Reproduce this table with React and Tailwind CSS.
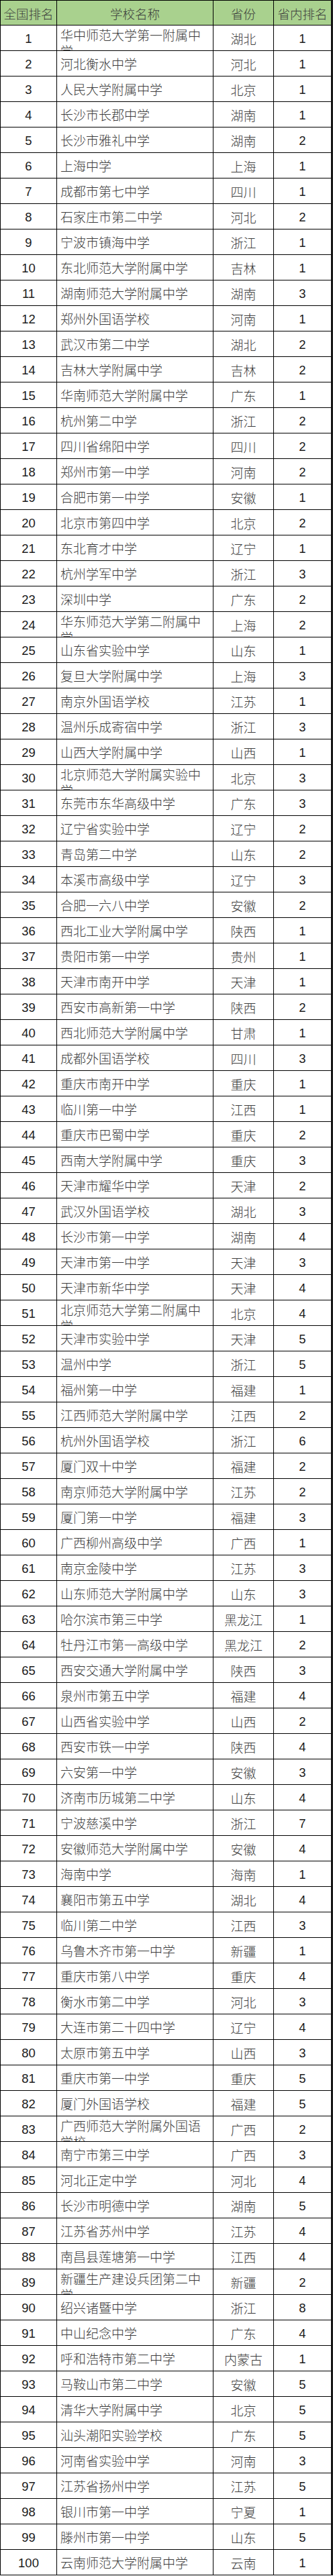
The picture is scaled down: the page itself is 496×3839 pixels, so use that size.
import React from 'react';

const rows = [
  [1, '华中师范大学第一附属中学', '湖北', 1],
  [2, '河北衡水中学', '河北', 1],
  [3, '人民大学附属中学', '北京', 1],
  [4, '长沙市长郡中学', '湖南', 1],
  [5, '长沙市雅礼中学', '湖南', 2],
  [6, '上海中学', '上海', 1],
  [7, '成都市第七中学', '四川', 1],
  [8, '石家庄市第二中学', '河北', 2],
  [9, '宁波市镇海中学', '浙江', 1],
  [10, '东北师范大学附属中学', '吉林', 1],
  [11, '湖南师范大学附属中学', '湖南', 3],
  [12, '郑州外国语学校', '河南', 1],
  [13, '武汉市第二中学', '湖北', 2],
  [14, '吉林大学附属中学', '吉林', 2],
  [15, '华南师范大学附属中学', '广东', 1],
  [16, '杭州第二中学', '浙江', 2],
  [17, '四川省绵阳中学', '四川', 2],
  [18, '郑州市第一中学', '河南', 2],
  [19, '合肥市第一中学', '安徽', 1],
  [20, '北京市第四中学', '北京', 2],
  [21, '东北育才中学', '辽宁', 1],
  [22, '杭州学军中学', '浙江', 3],
  [23, '深圳中学', '广东', 2],
  [24, '华东师范大学第二附属中学', '上海', 2],
  [25, '山东省实验中学', '山东', 1],
  [26, '复旦大学附属中学', '上海', 3],
  [27, '南京外国语学校', '江苏', 1],
  [28, '温州乐成寄宿中学', '浙江', 3],
  [29, '山西大学附属中学', '山西', 1],
  [30, '北京师范大学附属实验中学', '北京', 3],
  [31, '东莞市东华高级中学', '广东', 3],
  [32, '辽宁省实验中学', '辽宁', 2],
  [33, '青岛第二中学', '山东', 2],
  [34, '本溪市高级中学', '辽宁', 3],
  [35, '合肥一六八中学', '安徽', 2],
  [36, '西北工业大学附属中学', '陕西', 1],
  [37, '贵阳市第一中学', '贵州', 1],
  [38, '天津市南开中学', '天津', 1],
  [39, '西安市高新第一中学', '陕西', 2],
  [40, '西北师范大学附属中学', '甘肃', 1],
  [41, '成都外国语学校', '四川', 3],
  [42, '重庆市南开中学', '重庆', 1],
  [43, '临川第一中学', '江西', 1],
  [44, '重庆市巴蜀中学', '重庆', 2],
  [45, '西南大学附属中学', '重庆', 3],
  [46, '天津市耀华中学', '天津', 2],
  [47, '武汉外国语学校', '湖北', 3],
  [48, '长沙市第一中学', '湖南', 4],
  [49, '天津市第一中学', '天津', 3],
  [50, '天津市新华中学', '天津', 4],
  [51, '北京师范大学第二附属中学', '北京', 4],
  [52, '天津市实验中学', '天津', 5],
  [53, '温州中学', '浙江', 5],
  [54, '福州第一中学', '福建', 1],
  [55, '江西师范大学附属中学', '江西', 2],
  [56, '杭州外国语学校', '浙江', 6],
  [57, '厦门双十中学', '福建', 2],
  [58, '南京师范大学附属中学', '江苏', 2],
  [59, '厦门第一中学', '福建', 3],
  [60, '广西柳州高级中学', '广西', 1],
  [61, '南京金陵中学', '江苏', 3],
  [62, '山东师范大学附属中学', '山东', 3],
  [63, '哈尔滨市第三中学', '黑龙江', 1],
  [64, '牡丹江市第一高级中学', '黑龙江', 2],
  [65, '西安交通大学附属中学', '陕西', 3],
  [66, '泉州市第五中学', '福建', 4],
  [67, '山西省实验中学', '山西', 2],
  [68, '西安市铁一中学', '陕西', 4],
  [69, '六安第一中学', '安徽', 3],
  [70, '济南市历城第二中学', '山东', 4],
  [71, '宁波慈溪中学', '浙江', 7],
  [72, '安徽师范大学附属中学', '安徽', 4],
  [73, '海南中学', '海南', 1],
  [74, '襄阳市第五中学', '湖北', 4],
  [75, '临川第二中学', '江西', 3],
  [76, '乌鲁木齐市第一中学', '新疆', 1],
  [77, '重庆市第八中学', '重庆', 4],
  [78, '衡水市第二中学', '河北', 3],
  [79, '大连市第二十四中学', '辽宁', 4],
  [80, '太原市第五中学', '山西', 3],
  [81, '重庆市第一中学', '重庆', 5],
  [82, '厦门外国语学校', '福建', 5],
  [83, '广西师范大学附属外国语学校', '广西', 2],
  [84, '南宁市第三中学', '广西', 3],
  [85, '河北正定中学', '河北', 4],
  [86, '长沙市明德中学', '湖南', 5],
  [87, '江苏省苏州中学', '江苏', 4],
  [88, '南昌县莲塘第一中学', '江西', 4],
  [89, '新疆生产建设兵团第二中学', '新疆', 2],
  [90, '绍兴诸暨中学', '浙江', 8],
  [91, '中山纪念中学', '广东', 4],
  [92, '呼和浩特市第二中学', '内蒙古', 1],
  [93, '马鞍山市第二中学', '安徽', 5],
  [94, '清华大学附属中学', '北京', 5],
  [95, '汕头潮阳实验学校', '广东', 5],
  [96, '河南省实验中学', '河南', 3],
  [97, '江苏省扬州中学', '江苏', 5],
  [98, '银川市第一中学', '宁夏', 1],
  [99, '滕州市第一中学', '山东', 5],
  [100, '云南师范大学附属中学', '云南', 1],
];

const cjk = "font-['Noto_Sans_CJK_SC',sans-serif] font-light text-[#3c3c3c]";
const num = "font-['Liberation_Sans',Arial,sans-serif] text-[18.5px] text-[#1c1c1c]";
const cell = 'h-[38px] border-r border-b border-black overflow-hidden bg-white';

// long names wrap to a second line that the row height clips, as in the sheet
const Row = ({ rank, name, prov, inRank }) => {
  const wraps = name.length > 11;
  return (
    <>
      <div className={`${cell} ${num} flex items-center justify-center pt-[3px]`}>{rank}</div>
      <div className={`${cell} ${cjk} text-[19px] leading-[24px] pl-[5px] pr-[10px] ${wraps ? 'pt-[2px]' : 'pt-[7px]'}`}>
        {name}
      </div>
      <div className={`${cell} ${cjk} text-[19px] flex items-center justify-center pt-[3px]`}>{prov}</div>
      <div className={`${cell} ${num} flex items-center justify-center pt-[3px]`}>{inRank}</div>
    </>
  );
};

export default function App() {
  return (
    <div className="w-[496px] bg-[#1e1e1e]">
      <div className="w-[493px] grid grid-cols-[84px_233px_90px_86px] border-l border-t border-black bg-white">
        {['全国排名', '学校名称', '省份', '省内排名'].map((h) => (
          <div
            key={h}
            className={`h-[37px] border-r border-b border-black bg-[#a9d18e] ${cjk} text-[18.5px] flex items-center justify-center pt-[4px]`}
          >
            {h}
          </div>
        ))}
        {rows.map(([rank, name, prov, inRank]) => (
          <Row key={rank} rank={rank} name={name} prov={prov} inRank={inRank} />
        ))}
      </div>
    </div>
  );
}
